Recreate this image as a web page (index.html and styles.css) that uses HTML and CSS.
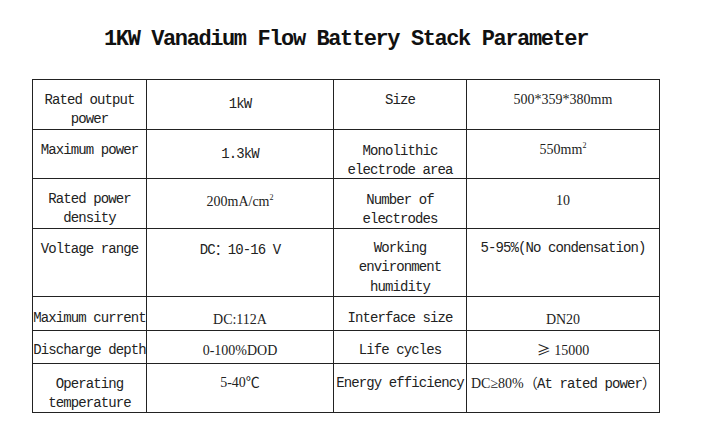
FILE: index.html
```html
<!DOCTYPE html>
<html lang="en">
<head>
<meta charset="utf-8">
<title>1KW Vanadium Flow Battery Stack Parameter</title>
<link rel="stylesheet" href="styles.css">
</head>
<body>
<div class="page">
  <h1 class="title">1KW Vanadium Flow Battery Stack Parameter</h1>
  <div class="spec">
    <div class="cell mono">Rated output power</div>
    <div class="cell mono s4">1kW</div>
    <div class="cell mono">Size</div>
    <div class="cell serif">500*359*380mm</div>

    <div class="cell mono">Maximum power</div>
    <div class="cell mono s4">1.3kW</div>
    <div class="cell mono s1">Monolithic electrode area</div>
    <div class="cell serif">550mm<sup class="sq">2</sup></div>

    <div class="cell mono">Rated power density</div>
    <div class="cell serif s3">200mA/cm<sup class="sq">2</sup></div>
    <div class="cell mono s1">Number of electrodes</div>
    <div class="cell serif s2">10</div>

    <div class="cell mono">Voltage range</div>
    <div class="cell mono s1">DC：10-16 V</div>
    <div class="cell mono n1">Working environment humidity</div>
    <div class="cell mono n1">5-95%(No condensation)</div>

    <div class="cell mono s1">Maximum current</div>
    <div class="cell serif s3">DC:112A</div>
    <div class="cell mono s1">Interface size</div>
    <div class="cell serif s3">DN20</div>

    <div class="cell mono n1">Discharge depth</div>
    <div class="cell serif">0-100%DOD</div>
    <div class="cell mono n1">Life cycles</div>
    <div class="cell serif n1"><span class="cjk">≥</span> 15000</div>

    <div class="cell mono">Operating temperature</div>
    <div class="cell serif n1">5-40℃</div>
    <div class="cell mono n1">Energy efficiency</div>
    <div class="cell mono n1"><span class="inline-serif">DC≥80%</span>（At rated power）</div>
  </div>
</div>
</body>
</html>
```
FILE: styles.css
```css
body {
  margin: 0;
  background: #ffffff;
}

.page {
  margin-left: 32px;
  width: 628px;
}

.title {
  margin: 0 0 27px;
  padding-top: 28px;
  height: 24px;
  line-height: 24px;
  text-align: center;
  font-family: "Liberation Mono", monospace;
  font-weight: bold;
  font-size: 22px;
  letter-spacing: -1.4px;
  color: #111111;
  white-space: nowrap;
}

.spec {
  display: grid;
  grid-template-columns: 113px 186px 132px 192px;
  grid-template-rows: 49px 48px 49px 67px 33px 32px 48px;
  gap: 1px;
  padding: 1px;
  width: 626px;
  background: #222222;
}

.cell {
  --shift: 0px;
  background: #ffffff;
  text-align: center;
  font-size: 14px;
  line-height: 19.5px;
  color: #222222;
  padding-top: calc(var(--base) + var(--shift));
  overflow: visible;
}

.mono {
  --base: 10.5px;
  font-family: "Liberation Mono", "Noto Sans CJK SC", monospace;
  letter-spacing: -0.9px;
}

.serif {
  --base: 9.5px;
  font-family: "Liberation Serif", "Noto Sans CJK SC", serif;
  letter-spacing: 0;
}

.s1 { --shift: 1px; }
.s2 { --shift: 2px; }
.s3 { --shift: 3px; }
.s4 { --shift: 4px; }
.n1 { --shift: -1px; }

.inline-serif {
  font-family: "Liberation Serif", "Noto Sans CJK SC", serif;
  letter-spacing: 0;
}

.cjk {
  font-family: "Noto Sans CJK SC", sans-serif;
}

.sq {
  font-size: 8px;
  line-height: 0;
  vertical-align: 6px;
}
```
